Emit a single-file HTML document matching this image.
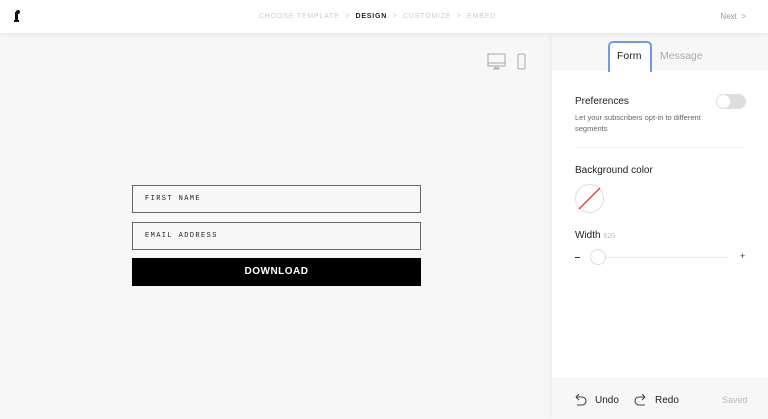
<!DOCTYPE html>
<html><head><style>
*{margin:0;padding:0;box-sizing:border-box}
body{width:768px;height:419px;overflow:hidden;background:#f7f7f7;font-family:"Liberation Sans",sans-serif;position:relative}
.hdr{position:absolute;left:0;top:0;width:768px;height:33px;background:#fff;box-shadow:0 1px 6px rgba(0,0,0,.08);z-index:2}
.steps{position:absolute;top:13px;left:259px;font-size:7px;letter-spacing:.8px;color:#ccc}
.steps b{color:#222;font-weight:bold}
.next{position:absolute;right:22px;top:12px;font-size:8px;color:#999}
.panel{position:absolute;left:552px;top:33px;width:216px;height:386px;background:#f7f7f7;box-shadow:-2px 0 6px rgba(0,0,0,.05)}
.content{position:absolute;left:0;top:37px;width:216px;height:308px;background:#fff}
.tab{position:absolute;top:8px;font-size:10.5px}
.inp{position:absolute;left:132px;width:289px;height:28px;border:1.3px solid #666;background:#f7f7f7;font-family:"Liberation Mono",monospace;font-size:7px;letter-spacing:1.4px;color:#222;padding:9px 0 0 12px}
.btn{position:absolute;left:132px;top:258px;width:289px;height:28px;background:#000;color:#fff;font-weight:bold;font-size:10px;letter-spacing:.5px;text-align:center;line-height:28px}
.t{position:absolute;font-size:10px;color:#222}
</style></head><body>
<div class="hdr">
 <div style="position:absolute;left:15px;top:12px;width:3px;height:9px;background:#111"></div>
 <div style="position:absolute;top:10px;width:4px;height:4px;border-radius:50%;background:#111;left:16px"></div>
 <div style="position:absolute;left:14px;top:20px;width:5px;height:1.5px;background:#111"></div>
 <div class="steps">CHOOSE TEMPLATE &nbsp;&gt;&nbsp; <b>DESIGN</b> &nbsp;&gt;&nbsp; CUSTOMIZE &nbsp;&gt;&nbsp; EMBED</div>
 <div class="next">Next &nbsp;&gt;</div>
</div>
<svg style="position:absolute;left:486px;top:53px" width="44" height="18" viewBox="0 0 44 18"><rect x="2" y="1" width="17" height="12" fill="none" stroke="#aaa" stroke-width="1"/><line x1="2" y1="10" x2="19" y2="10" stroke="#aaa"/><path d="M9 13v2h3v-2M7 16h7" stroke="#aaa" fill="none"/><rect x="32" y="1" width="7" height="15" rx="1.5" fill="none" stroke="#aaa"/></svg>
<div class="inp" style="top:185px">FIRST NAME</div>
<div class="inp" style="top:222px">EMAIL ADDRESS</div>
<div class="btn">DOWNLOAD</div>
<div class="panel">
 <div class="content">
  <div class="t" style="left:23px;top:26px">Preferences</div>
  <div style="position:absolute;left:164px;top:24px;width:30px;height:15px;border-radius:8px;background:#ddd"></div>
  <div style="position:absolute;left:165px;top:25px;width:13px;height:13px;border-radius:50%;background:#fff"></div>
  <div style="position:absolute;left:23px;top:42px;font-size:7.5px;line-height:11px;color:#666;width:140px">Let your subscribers opt-in to different segments</div>
  <div style="position:absolute;left:23px;top:77px;width:170px;height:1px;background:#f0f0f0"></div>
  <div class="t" style="left:23px;top:95px">Background color</div>
  <svg style="position:absolute;left:22px;top:113px" width="32" height="32"><circle cx="15.5" cy="15.5" r="14" fill="#fff" stroke="#ddd"/><line x1="5" y1="26" x2="26" y2="5" stroke="#f33" stroke-width="1.3"/></svg>
  <div class="t" style="left:23px;top:160px">Width <span style="font-size:7px;color:#bbb">620</span></div>
  <div style="position:absolute;left:23px;top:187px;width:5px;height:1px;background:#333"></div>
  <div style="position:absolute;left:40px;top:187px;width:137px;height:1px;background:#eee"></div>
  <div style="position:absolute;left:38px;top:179px;width:16px;height:16px;border-radius:50%;background:#fff;border:1px solid #ddd"></div>
  <div style="position:absolute;left:188px;top:181px;font-size:9px;color:#333">+</div>
 </div>
 <div style="position:absolute;left:56px;top:8px;width:44px;height:31px;border:2.5px solid #6f9be6;border-bottom:none;border-radius:5px 5px 0 0;background:#fff"></div>
 <div class="tab" style="left:65px;top:17px;color:#222">Form</div>
 <div class="tab" style="left:108px;top:17px;color:#aaa">Message</div>
 <svg style="position:absolute;left:22px;top:361px" width="14" height="12"><path d="M2 3h6a4 4 0 0 1 0 8H3M2 3l3-3M2 3l3 3" fill="none" stroke="#444" stroke-width="1.1"/></svg>
 <div class="t" style="left:43px;top:362px">Undo</div>
 <svg style="position:absolute;left:81px;top:361px" width="14" height="12"><path d="M12 3H6a4 4 0 0 0 0 8h6M12 3L9 0M12 3L9 6" fill="none" stroke="#444" stroke-width="1.1"/></svg>
 <div class="t" style="left:103px;top:362px">Redo</div>
 <div class="t" style="left:170px;top:362px;color:#bbb;font-size:9px">Saved</div>
</div>
</body></html>
